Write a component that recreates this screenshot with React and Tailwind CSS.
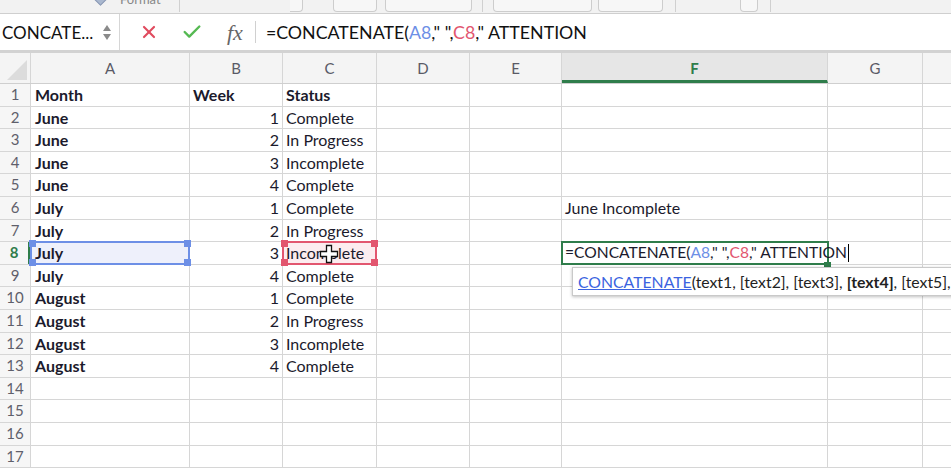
import { X, Check } from 'lucide-react'

const cols = [
  { key: 'A', w: 'w-[159px]' },
  { key: 'B', w: 'w-[93px]' },
  { key: 'C', w: 'w-[94px]' },
  { key: 'D', w: 'w-[93px]' },
  { key: 'E', w: 'w-[92px]' },
  { key: 'F', w: 'w-[266px]' },
  { key: 'G', w: 'w-[95px]' },
  { key: 'H', w: 'w-[40px]' },
]

const data = [
  ['Month', 'Week', 'Status'],
  ['June', 1, 'Complete'],
  ['June', 2, 'In Progress'],
  ['June', 3, 'Incomplete'],
  ['June', 4, 'Complete'],
  ['July', 1, 'Complete'],
  ['July', 2, 'In Progress'],
  ['July', 3, 'Incomplete'],
  ['July', 4, 'Complete'],
  ['August', 1, 'Complete'],
  ['August', 2, 'In Progress'],
  ['August', 3, 'Incomplete'],
  ['August', 4, 'Complete'],
  ['', '', ''],
  ['', '', ''],
  ['', '', ''],
  ['', '', ''],
]

function Handles({ color }) {
  return (
    <>
      <span className={`absolute -left-[3px] -top-[3px] w-[7px] h-[7px] ${color}`} />
      <span className={`absolute -right-[3px] -top-[3px] w-[7px] h-[7px] ${color}`} />
      <span className={`absolute -left-[3px] -bottom-[3px] w-[7px] h-[7px] ${color}`} />
      <span className={`absolute -right-[3px] -bottom-[3px] w-[7px] h-[7px] ${color}`} />
    </>
  )
}

function CrossCursor() {
  return (
    <svg width="20" height="20" viewBox="0 0 20 20" className="absolute left-[35px] top-[1px] z-20">
      <path d="M7.5 1.5h5v6h6v5h-6v6h-5v-6h-6v-5h6z" fill="#fff" stroke="#111" strokeWidth="1.3" />
    </svg>
  )
}

function Cell({ col, row, value }) {
  const base = `relative shrink-0 h-full border-r border-[#d6d6d6] ${col.w}`
  if (col.key === 'A') {
    return (
      <div className={`${base} ${row === 8 ? 'bg-[#eef0fb]' : ''}`}>
        <span className="absolute left-[4px] top-[0px] font-bold">{value}</span>
        {row === 8 && (
          <div className="absolute inset-[-1px] border-2 border-[#6d8fe6] z-10">
            <Handles color="bg-[#6d8fe6]" />
          </div>
        )}
      </div>
    )
  }
  if (col.key === 'B') {
    return (
      <div className={base}>
        <span className={`absolute top-[0px] ${row === 1 ? 'left-[3px] font-bold' : 'right-[3px]'}`}>{value}</span>
      </div>
    )
  }
  if (col.key === 'C') {
    return (
      <div className={`${base} ${row === 8 ? 'bg-[#fcecef]' : ''}`}>
        <span className={`absolute left-[3px] top-[0px] whitespace-nowrap ${row === 1 ? 'font-bold' : ''}`}>{value}</span>
        {row === 8 && (
          <div className="absolute inset-[-1px] border-2 border-[#e2566f] z-10">
            <Handles color="bg-[#e2566f]" />
            <CrossCursor />
          </div>
        )}
      </div>
    )
  }
  if (col.key === 'F') {
    if (row === 6) {
      return (
        <div className={base}>
          <span className="absolute left-[3px] top-[0px] whitespace-nowrap">June Incomplete</span>
        </div>
      )
    }
    if (row === 8) {
      return (
        <div className={`${base} z-30`}>
          <div className="absolute -left-[1px] -top-[1px] -bottom-[1px] w-[268px] border-2 border-[#2f7d4b]" />
          <span className="absolute -right-[4px] -bottom-[4px] w-[7px] h-[6px] bg-[#2f7d4b]" />
          <span className="absolute left-[3px] top-[0px] whitespace-nowrap z-10 flex items-center text-[15.6px]">
            =CONCATENATE(<span className="text-[#6d8fe6]">A8</span>," ",<span className="text-[#e2566f]">C8</span>," ATTENTION
            <span className="inline-block w-[1px] h-[18px] bg-black ml-[1px]" />
          </span>
          <div className="absolute left-[10px] top-[25px] w-[500px] h-[29px] bg-white border border-[#c9c9c9] shadow-[0_1px_3px_rgba(0,0,0,0.25)] pl-[5px] pt-[3px] whitespace-nowrap text-[15.8px] text-[#222]">
            <span className="text-[#3b63e0] underline">CONCATENATE</span>(text1, [text2], [text3], <span className="font-bold">[text4]</span>, [text5], ...)
          </div>
        </div>
      )
    }
  }
  return <div className={base} />
}

export default function App() {
  return (
    <div className="w-[951px] h-[470px] overflow-hidden bg-white text-[#1b1a2c] font-['Lato','Open_Sans',sans-serif] text-[16px] leading-[21px]">
      {/* ribbon remnant */}
      <div className="h-[13px] bg-[#f2f2f2] flex items-start relative">
        <div className="ml-[92px] w-[16px] h-[6px] flex justify-center">
          <div className="w-[9px] h-[9px] -mt-[5px] rotate-45 bg-[#aab8cf] border border-[#8b99b4]" />
        </div>
        <div className="ml-[12px] -mt-[11px] text-[13px] text-[#888]">Format</div>
        <div className="ml-[18px] w-px h-[12px] bg-[#d0d0d0]" />
        <div className="ml-[110px] w-[13px] h-[12px] bg-[#f7f7f7] border-b border-r border-[#cdcdcd] rounded-br" />
        <div className="ml-[30px] w-[44px] h-[12px] bg-[#f7f7f7] border border-t-0 border-[#cdcdcd] rounded-b" />
        <div className="ml-[8px] w-[87px] h-[12px] bg-[#f7f7f7] border border-t-0 border-[#cdcdcd] rounded-b" />
        <div className="ml-[10px] w-px h-[12px] bg-[#d0d0d0]" />
        <div className="ml-[10px] w-[99px] h-[12px] bg-[#f7f7f7] border border-t-0 border-[#cdcdcd] rounded-b" />
        <div className="ml-[6px] w-[65px] h-[12px] bg-[#f7f7f7] border border-t-0 border-[#cdcdcd] rounded-b" />
        <div className="ml-[12px] w-px h-[12px] bg-[#d0d0d0]" />
        <div className="ml-[64px] w-[18px] h-[12px] bg-[#f7f7f7] border border-t-0 border-[#cdcdcd] rounded-b" />
        <div className="ml-[12px] w-px h-[12px] bg-[#d0d0d0]" />
      </div>

      {/* formula bar */}
      <div className="h-[40px] border-t border-[#cfcfcf] border-b-[3px] border-b-[#d2d2d2] flex items-center bg-white">
        <div className="w-[120px] h-full flex items-center border-r border-[#d6d6d6]">
          <span className="ml-[2px] text-[17px] text-[#111]">CONCATE...</span>
          <div className="ml-[10px] flex flex-col gap-[3px]">
            <svg width="8" height="6" viewBox="0 0 8 6"><path d="M4 0L8 6H0z" fill="#8a8a8a" /></svg>
            <svg width="8" height="6" viewBox="0 0 8 6"><path d="M0 0h8L4 6z" fill="#8a8a8a" /></svg>
          </div>
        </div>
        <X className="ml-[19px] w-[20px] h-[20px] text-[#e04a5e]" strokeWidth={2.6} />
        <Check className="ml-[22px] w-[22px] h-[22px] text-[#55b952]" strokeWidth={2.6} />
        <span className="ml-[24px] text-[22px] italic text-[#666] font-['Liberation_Serif',serif]">fx</span>
        <div className="ml-[12px] w-px h-[22px] bg-[#d0d0d0]" />
        <span className="ml-[10px] text-[17.8px] text-[#111] whitespace-nowrap">
          =CONCATENATE(<span className="text-[#6d8fe6]">A8</span>," ",<span className="text-[#e2566f]">C8</span>," ATTENTION
        </span>
      </div>

      {/* column headers */}
      <div className="flex h-[31px] bg-[#f4f4f4] border-b border-[#cfcfcf] text-[15px] text-[#5a5a66]">
        <div className="w-[31px] shrink-0 border-r border-[#d6d6d6] relative">
          <svg width="20" height="20" viewBox="0 0 20 20" className="absolute right-[3px] bottom-[3px]">
            <path d="M20 0V20H0z" fill="#dcdcdc" />
          </svg>
        </div>
        {cols.map(c => (
          <div
            key={c.key}
            className={`${c.w} shrink-0 border-r border-[#d6d6d6] flex items-center justify-center ${
              c.key === 'F' ? 'bg-[#e6e6e6] border-b-[3px] border-b-[#2f7d4b] text-[#2f7d4b] font-bold pt-[3px]' : ''
            }`}
          >
            {c.key === 'H' ? '' : c.key}
          </div>
        ))}
      </div>

      {/* rows */}
      {data.map((r, i) => {
        const row = i + 1
        return (
          <div key={row} className="flex h-[22.6px] border-b border-[#d6d6d6]">
            <div
              className={`w-[31px] shrink-0 bg-[#f6f6f6] border-r text-center text-[15px] ${
                row === 8 ? 'border-r-[3px] border-r-[#2f7d4b] text-[#2f7d4b] font-bold' : 'border-[#d6d6d6] text-[#5f5f6b]'
              }`}
            >
              {row}
            </div>
            {cols.map((c, j) => (
              <Cell key={c.key} col={c} row={row} value={j < 3 ? r[j] : ''} />
            ))}
          </div>
        )
      })}
    </div>
  )
}
